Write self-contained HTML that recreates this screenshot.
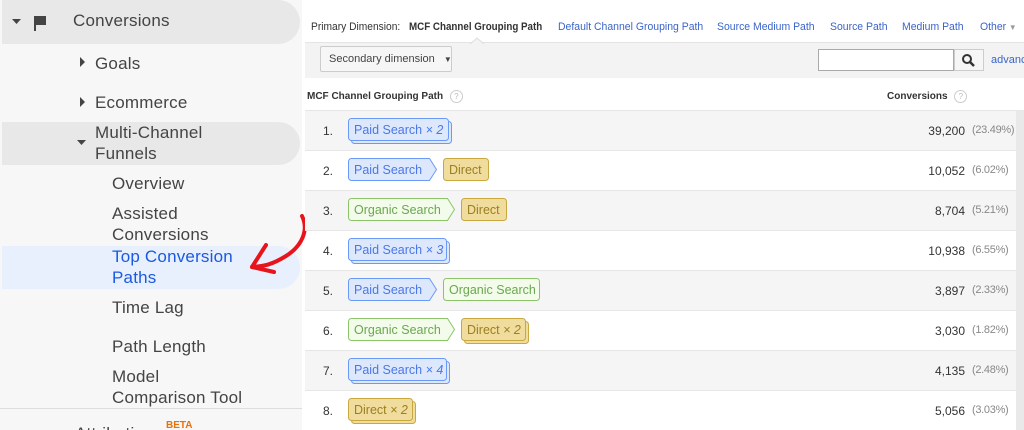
<!DOCTYPE html><html><head><meta charset="utf-8"><style>
*{margin:0;padding:0;box-sizing:border-box}
body{width:1024px;height:430px;overflow:hidden;background:#fff;font-family:"Liberation Sans",Arial,sans-serif;position:relative}
.sb{position:absolute;left:0;top:0;width:302px;height:430px;background:#f7f7f7;overflow:hidden}
.pill{position:absolute;left:2px;width:298px;border-radius:0 24px 24px 0;background:#e8e8e8}
.t{position:absolute;font-size:17px;color:#444;line-height:21px;letter-spacing:.2px}
.row{position:absolute;left:305px;width:711px;height:40px;border-top:1px solid #e6e6e6}
.g{background:#f5f5f5}
.n{position:absolute;left:18px;top:13px;font-size:12px;color:#333}
.v{position:absolute;right:51px;top:13px;font-size:12px;color:#333}
.p{position:absolute;left:667px;top:13px;font-size:11px;color:#888;letter-spacing:-.3px}
.tab{position:absolute;top:21px;font-size:11px;color:#3b64c8;transform-origin:0 0;white-space:nowrap;transform:scaleX(.95)}
</style></head><body>
<div class="sb">
<div class="pill" style="top:0;height:44px"></div>
<div class="pill" style="top:122px;height:43px"></div>
<div class="pill" style="top:246px;height:43px;background:#e8f0fe"></div>
<svg style="position:absolute;left:12px;top:14px" width="40" height="18"><path d="M0 5h9l-4.5 5z" fill="#444"/><path d="M22 2h2v15h-2zM24 2h10v9h-10z" fill="#444"/></svg>
<div class="t" style="left:73px;top:10px">Conversions</div>
<svg style="position:absolute;left:79px;top:57px" width="8" height="10"><path d="M1 0l5 5-5 5z" fill="#444"/></svg>
<div class="t" style="left:95px;top:53px">Goals</div>
<svg style="position:absolute;left:79px;top:97px" width="8" height="10"><path d="M1 0l5 5-5 5z" fill="#444"/></svg>
<div class="t" style="left:95px;top:92px">Ecommerce</div>
<svg style="position:absolute;left:77px;top:139px" width="10" height="8"><path d="M0 1h9l-4.5 5z" fill="#444"/></svg>
<div class="t" style="left:95px;top:122px">Multi-Channel<br>Funnels</div>
<div class="t" style="left:112px;top:173px">Overview</div>
<div class="t" style="left:112px;top:203px">Assisted<br>Conversions</div>
<div class="t" style="left:112px;top:246px;color:#1a5ae0">Top Conversion<br>Paths</div>
<div class="t" style="left:112px;top:297px">Time Lag</div>
<div class="t" style="left:112px;top:336px">Path Length</div>
<div class="t" style="left:112px;top:366px">Model<br>Comparison Tool</div>
<div style="position:absolute;left:0;top:408px;width:302px;height:1px;background:#ddd"></div>
<div class="t" style="left:75px;top:423px">Attribution</div>
<div style="position:absolute;left:166px;top:420px;font-size:10px;color:#e8710a;font-weight:bold">BETA</div>
</div>
<svg style="position:absolute;left:0;top:0" width="320" height="300"><path d="M302 216c7 14 0 30-16 40s-24 10-34 11" stroke="#e8141c" stroke-width="4" fill="none" stroke-linecap="round"/><path d="M266 245l-14 22 22 5" stroke="#e8141c" stroke-width="4" fill="none" stroke-linecap="round" stroke-linejoin="round"/></svg>
<div style="position:absolute;left:305px;top:42px;width:719px;height:36px;background:#f3f3f3;border-top:1px solid #e4e4e4"></div>
<div class="tab" style="left:311px;color:#333;transform:scaleX(.93)">Primary Dimension:</div>
<div class="tab" style="left:409px;color:#333;font-weight:bold;transform:scaleX(.89)">MCF Channel Grouping Path</div>
<svg style="position:absolute;left:470px;top:37px" width="14" height="7"><path d="M0 7l7-6 7 6" fill="#f3f3f3" stroke="#ddd"/></svg>
<div class="tab" style="left:558px">Default Channel Grouping Path</div>
<div class="tab" style="left:717px">Source Medium Path</div>
<div class="tab" style="left:830px">Source Path</div>
<div class="tab" style="left:902px">Medium Path</div>
<div class="tab" style="left:980px">Other <span style="color:#999;font-size:8px">▼</span></div>
<div style="position:absolute;left:320px;top:46px;width:132px;height:26px;border:1px solid #ccc;border-radius:2px;background:#f6f6f6;font-size:11px;color:#444;padding:6px 0 0 8px;white-space:nowrap">Secondary dimension <span style="font-size:8px;margin-left:6px">▼</span></div>
<div style="position:absolute;left:818px;top:49px;width:136px;height:22px;border:1px solid #aaa;background:#fff"></div>
<div style="position:absolute;left:954px;top:49px;width:30px;height:22px;border:1px solid #ccc;background:#f6f6f6"><svg width="28" height="20"><circle cx="12" cy="9" r="4" stroke="#333" stroke-width="2" fill="none"/><path d="M15 12l4 4" stroke="#333" stroke-width="2.5"/></svg></div>
<div style="position:absolute;left:991px;top:54px;font-size:11px;color:#3b64c8">advanced</div>
<div style="position:absolute;left:305px;top:78px;width:719px;height:32px;background:#fff"></div>
<div style="position:absolute;left:307px;top:90px;font-size:10px;font-weight:bold;color:#333">MCF Channel Grouping Path <span style="display:inline-block;width:13px;height:13px;border:1px solid #ccc;border-radius:50%;color:#bbb;font-size:8px;text-align:center;line-height:11px;font-weight:normal;margin-left:4px">?</span></div>
<div style="position:absolute;left:887px;top:90px;font-size:10px;font-weight:bold;color:#333">Conversions <span style="display:inline-block;width:13px;height:13px;border:1px solid #ccc;border-radius:50%;color:#bbb;font-size:8px;text-align:center;line-height:11px;font-weight:normal;margin-left:4px">?</span></div>
<div style="position:absolute;left:1016px;top:110px;width:8px;height:320px;background:#e9e9e9"></div>
<div class="row g" style="top:110px"><span class="n">1.</span><span class="v">39,200</span><span class="p">(23.49%)</span></div>
<div class="row" style="top:150px"><span class="n">2.</span><span class="v">10,052</span><span class="p">(6.02%)</span></div>
<div class="row g" style="top:190px"><span class="n">3.</span><span class="v">8,704</span><span class="p">(5.21%)</span></div>
<div class="row" style="top:230px"><span class="n">4.</span><span class="v">10,938</span><span class="p">(6.55%)</span></div>
<div class="row g" style="top:270px"><span class="n">5.</span><span class="v">3,897</span><span class="p">(2.33%)</span></div>
<div class="row" style="top:310px"><span class="n">6.</span><span class="v">3,030</span><span class="p">(1.82%)</span></div>
<div class="row g" style="top:350px"><span class="n">7.</span><span class="v">4,135</span><span class="p">(2.48%)</span></div>
<div class="row" style="top:390px"><span class="n">8.</span><span class="v">5,056</span><span class="p">(3.03%)</span></div>
<svg style="position:absolute;left:0;top:0" width="1024" height="430" font-family="Liberation Sans, Arial, sans-serif" font-size="12.5">
<rect x="351.5" y="121.5" width="100" height="22" rx="3" fill="#dde8fd" stroke="#6a9af7"/>
<rect x="348.5" y="118.5" width="100" height="22" rx="3" fill="#dde8fd" stroke="#6a9af7"/>
<text x="354" y="134" fill="#4a78e6">Paid Search <tspan font-style="italic">× 2</tspan></text>
<path d="M351.5 158.5h78l7 11-7 11h-78a3 3 0 0 1-3-3v-16a3 3 0 0 1 3-3z" fill="#dde8fd" stroke="#6a9af7"/>
<text x="354" y="174" fill="#4a78e6">Paid Search</text>
<rect x="443.5" y="158.5" width="45" height="22" rx="3" fill="#f0dc9c" stroke="#c9a840"/>
<text x="449" y="174" fill="#9c7f22">Direct</text>
<path d="M351.5 198.5h96l7 11-7 11h-96a3 3 0 0 1-3-3v-16a3 3 0 0 1 3-3z" fill="#f3fbea" stroke="#8cc46a"/>
<text x="354" y="214" fill="#6aa84f">Organic Search</text>
<rect x="461.5" y="198.5" width="45" height="22" rx="3" fill="#f0dc9c" stroke="#c9a840"/>
<text x="467" y="214" fill="#9c7f22">Direct</text>
<rect x="351.5" y="241.5" width="98" height="22" rx="3" fill="#dde8fd" stroke="#6a9af7"/>
<rect x="348.5" y="238.5" width="98" height="22" rx="3" fill="#dde8fd" stroke="#6a9af7"/>
<text x="354" y="254" fill="#4a78e6">Paid Search <tspan font-style="italic">× 3</tspan></text>
<path d="M351.5 278.5h78l7 11-7 11h-78a3 3 0 0 1-3-3v-16a3 3 0 0 1 3-3z" fill="#dde8fd" stroke="#6a9af7"/>
<text x="354" y="294" fill="#4a78e6">Paid Search</text>
<rect x="443.5" y="278.5" width="96" height="22" rx="3" fill="#f3fbea" stroke="#8cc46a"/>
<text x="449" y="294" fill="#6aa84f">Organic Search</text>
<path d="M351.5 318.5h96l7 11-7 11h-96a3 3 0 0 1-3-3v-16a3 3 0 0 1 3-3z" fill="#f3fbea" stroke="#8cc46a"/>
<text x="354" y="334" fill="#6aa84f">Organic Search</text>
<rect x="464.5" y="321.5" width="64" height="22" rx="3" fill="#f0dc9c" stroke="#c9a840"/>
<rect x="461.5" y="318.5" width="64" height="22" rx="3" fill="#f0dc9c" stroke="#c9a840"/>
<text x="467" y="334" fill="#9c7f22">Direct <tspan font-style="italic">× 2</tspan></text>
<rect x="351.5" y="361.5" width="98" height="22" rx="3" fill="#dde8fd" stroke="#6a9af7"/>
<rect x="348.5" y="358.5" width="98" height="22" rx="3" fill="#dde8fd" stroke="#6a9af7"/>
<text x="354" y="374" fill="#4a78e6">Paid Search <tspan font-style="italic">× 4</tspan></text>
<rect x="351.5" y="401.5" width="64" height="22" rx="3" fill="#f0dc9c" stroke="#c9a840"/>
<rect x="348.5" y="398.5" width="64" height="22" rx="3" fill="#f0dc9c" stroke="#c9a840"/>
<text x="354" y="414" fill="#9c7f22">Direct <tspan font-style="italic">× 2</tspan></text>
</svg>
</body></html>
